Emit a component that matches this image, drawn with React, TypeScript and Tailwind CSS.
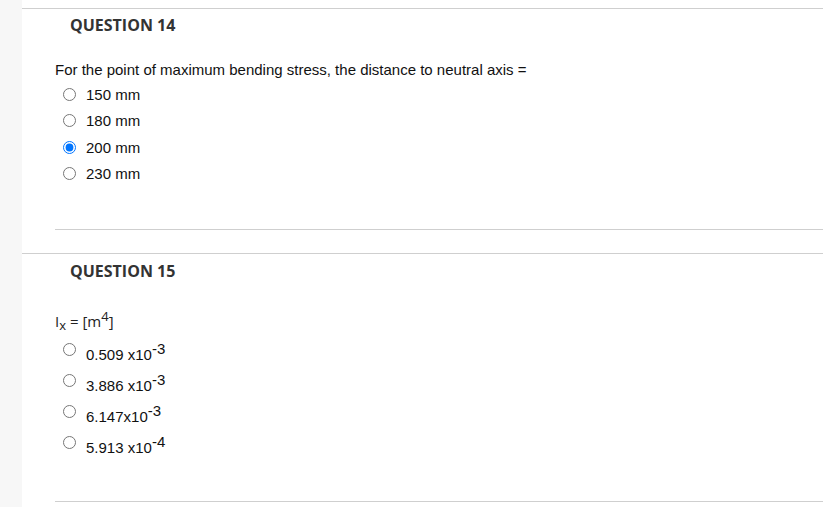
import React from 'react';

const q14Options = ['150 mm', '180 mm', '200 mm', '230 mm'];

const q15Options = [
  { base: '0.509 x10', exp: '-3' },
  { base: '3.886 x10', exp: '-3' },
  { base: '6.147x10', exp: '-3' },
  { base: '5.913 x10', exp: '-4' },
];

export default function App() {
  return (
    <div className="flex min-h-screen bg-white font-['Liberation_Sans',Arial,sans-serif] text-[15px] text-[#111]">
      {/* left rail */}
      <div className="w-[22px] shrink-0 bg-[#f7f7f7]" />

      <div className="flex-1 pt-2">
        {/* Question 14 */}
        <section className="border-t border-[#cfcfcf]">
          <h2 className="pl-[48px] pt-[4px] font-['Open_Sans',sans-serif] text-[16px] font-bold leading-6 text-[#333]">
            QUESTION 14
          </h2>
          <div className="pl-[33px]">
            <p className="mt-[23.5px] leading-[17px]">
              For the point of maximum bending stress, the distance to neutral axis =
            </p>
            <div className="mt-[3.5px] pl-[8px]">
              {q14Options.map((opt) => (
                <label key={opt} className="flex h-[26.5px] items-center">
                  <input
                    type="radio"
                    name="q14"
                    defaultChecked={opt === '200 mm'}
                    className="h-[13px] w-[13px]"
                  />
                  <span className="ml-[10px] leading-[17px]">{opt}</span>
                </label>
              ))}
            </div>
            <div className="mt-[42px] border-t border-[#cfcfcf]" />
          </div>
        </section>

        {/* Question 15 */}
        <section className="mt-[23px] border-t border-[#cfcfcf]">
          <h2 className="pl-[48px] pt-[5px] font-['Open_Sans',sans-serif] text-[16px] font-bold leading-6 text-[#333]">
            QUESTION 15
          </h2>
          <div className="pl-[33px]">
            <p className="mt-[28px] font-['Open_Sans',sans-serif] text-[15px] leading-5 text-[#222]">
              I<sub className="text-[13px]">x</sub> = [m<sup className="text-[13px]">4</sup>]
            </p>
            <div className="mt-[6px] pl-[8px]">
              {q15Options.map((opt) => (
                <label key={opt.base} className="flex h-[31px] items-start">
                  <input type="radio" name="q15" className="mt-[5.5px] h-[13px] w-[13px]" />
                  <span className="ml-[10px] pt-[8.5px] leading-[17px]">
                    {opt.base}
                    <sup className="-top-[6px] text-[15px]">{opt.exp}</sup>
                  </span>
                </label>
              ))}
            </div>
            <div className="mt-[40px] border-t border-[#cfcfcf]" />
          </div>
        </section>
      </div>
    </div>
  );
}
